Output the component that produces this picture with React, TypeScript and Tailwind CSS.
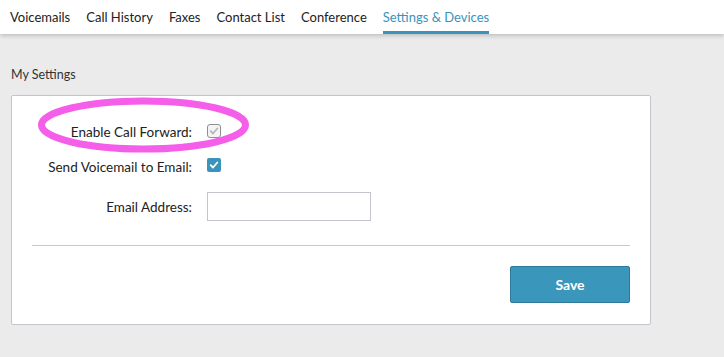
import React from "react";

const tabs = ["Voicemails", "Call History", "Faxes", "Contact List", "Conference", "Settings & Devices"];

function Check({ disabled }: { disabled?: boolean }) {
  if (disabled) {
    return (
      <span className="flex h-[14px] w-[14px] items-center justify-center rounded-[3px] border border-[#8e8e93] bg-[#f4f4f4]">
        <svg viewBox="0 0 12 12" className="h-[10px] w-[10px]">
          <path d="M2 6.2 L4.8 9 L10 3" fill="none" stroke="#b8b8bc" strokeWidth="2.2" strokeLinecap="round" strokeLinejoin="round" />
        </svg>
      </span>
    );
  }
  return (
    <span className="flex h-[14px] w-[14px] items-center justify-center rounded-[2px] bg-[#3a93bb]">
      <svg viewBox="0 0 12 12" className="h-[10px] w-[10px]">
        <path d="M2 6.2 L4.8 9 L10 3" fill="none" stroke="#ffffff" strokeWidth="2.2" strokeLinecap="round" strokeLinejoin="round" />
      </svg>
    </span>
  );
}

export default function App() {
  return (
    <div className="relative h-[357px] w-[724px] overflow-hidden bg-[#ebebeb] font-['Lato','Open_Sans',sans-serif] text-[13.5px] text-[#222]">
      <nav className="relative z-10 flex h-[34px] gap-[16px] bg-white pl-[10px] text-[13px] shadow-[0_2px_4px_rgba(0,0,0,0.18)]">
        {tabs.map((t, i) => (
          <div
            key={t}
            className={
              i === tabs.length - 1
                ? "flex items-center border-b-[3px] border-[#3a93bb] pt-[4px] text-[#3a93bb]"
                : "flex items-center border-b-[3px] border-transparent pt-[4px]"
            }
          >
            {t}
          </div>
        ))}
      </nav>

      <div className="px-[11px] pt-[33px]">
        <div className="text-[12.5px] leading-[16px] text-[#333]">My Settings</div>
        <div className="mt-[12px] h-[230px] w-[640px] rounded-[2px] border border-[#c4c4cc] bg-white px-[20px] pt-[22px]">
          <div className="grid grid-cols-[160px_1fr] items-center gap-x-[15px]">
            <div className="text-right leading-[28px]">Enable Call Forward:</div>
            <div className="-mt-[2px]"><Check disabled /></div>
            <div className="mt-[7px] text-right leading-[28px]">Send Voicemail to Email:</div>
            <div className="-mt-[4px] pt-[7px]"><Check /></div>
            <div className="mt-[11px] text-right leading-[28px]">Email Address:</div>
            <div className="mt-[11px]">
              <input className="h-[29px] w-[164px] border border-[#c4c4cc] bg-white outline-none" />
            </div>
          </div>
          <div className="mt-[24px] h-px bg-[#c8c8cc]" />
          <div className="mt-[20px] flex justify-end">
            <button className="h-[37px] w-[120px] rounded-[2px] border border-[#2d7a9a] bg-[#3a96ba] text-[14px] font-bold text-white">
              Save
            </button>
          </div>
        </div>
      </div>

      <svg className="pointer-events-none absolute left-0 top-0" width="724" height="357">
        <ellipse cx="143.5" cy="125" rx="102" ry="24" fill="none" stroke="#f55ee9" strokeWidth="7" />
      </svg>
    </div>
  );
}
